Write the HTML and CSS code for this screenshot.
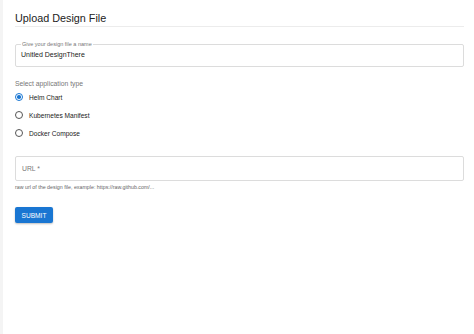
FILE: index.html
```html
<!DOCTYPE html>
<html lang="en">
<head>
  <meta charset="UTF-8" />
  <title>Upload Design File</title>
  <link rel="stylesheet" href="styles.css">
</head>
<body>
  <div class="page">
    <h2 class="title">Upload Design File</h2>

    <fieldset class="field filled">
      <legend>Give your design file a name</legend>
      <div class="value">Unitled DesignThere</div>
    </fieldset>

    <div class="group-label">Select application type</div>
    <div class="radios">
      <label class="radio checked"><span class="dot"></span>Helm Chart</label>
      <label class="radio"><span class="dot"></span>Kubernetes Manifest</label>
      <label class="radio"><span class="dot"></span>Docker Compose</label>
    </div>

    <div class="field url">
      <div class="placeholder">URL *</div>
    </div>
    <div class="helper">raw url of the design file, example: https://raw.github.com/...</div>

    <button class="submit">SUBMIT</button>
  </div>
</body>
</html>
```

FILE: styles.css
```css
body {
  margin: 0;
  font-family: 'Liberation Sans', Arial, sans-serif;
  color: #222;
  background: #fff;
}
.page {
  height: 334px;
  box-sizing: border-box;
  border-left: 3px solid #f4f4f4;
  padding: 11px 10px 0 12px;
}
.title {
  margin: 0;
  font-size: 10.8px;
  line-height: 14px;
  font-weight: normal;
  color: #222;
  padding-bottom: 1px;
  border-bottom: 1px solid #ececec;
}
.field {
  border: 1px solid #dcdcdc;
  border-radius: 2px;
  box-sizing: border-box;
  margin: 0;
}
.field.filled {
  margin-top: 15px;
  height: 25px;
  padding: 0 5px;
}
.field legend {
  font-size: 5.5px;
  color: #777;
  padding: 0 1px;
  margin-left: 0;
  line-height: 4px;
}
.value {
  font-size: 7px;
  line-height: 8px;
  margin-top: 5px;
  color: #222;
}
.group-label {
  margin-top: 13px;
  font-size: 6.8px;
  color: #777;
}
.radios {
  margin-top: 1px;
}
.radio {
  display: flex;
  align-items: center;
  height: 18px;
  font-size: 6.6px;
  color: #222;
}
.dot {
  width: 6px;
  height: 6px;
  border: 1.2px solid #555;
  border-radius: 50%;
  margin: 0 6px 0 0;
  position: relative;
}
.radio.checked .dot {
  border-color: #1976d2;
}
.radio.checked .dot::after {
  content: '';
  position: absolute;
  left: 1.2px;
  top: 1.2px;
  width: 3.6px;
  height: 3.6px;
  border-radius: 50%;
  background: #1976d2;
}
.field.url {
  margin-top: 14px;
  height: 25px;
  display: flex;
  align-items: center;
  padding-left: 6px;
}
.placeholder {
  font-size: 6.8px;
  color: #777;
}
.helper {
  margin-top: 3px;
  font-size: 5.3px;
  color: #666;
}
.submit {
  display: block;
  margin-top: 17px;
  background: #1976d2;
  color: #fff;
  border: none;
  border-radius: 2px;
  font-family: inherit;
  font-size: 6.6px;
  height: 16px;
  width: 38px;
  padding: 0;
  box-shadow: 0 1px 2px rgba(0,0,0,0.25);
}
```
